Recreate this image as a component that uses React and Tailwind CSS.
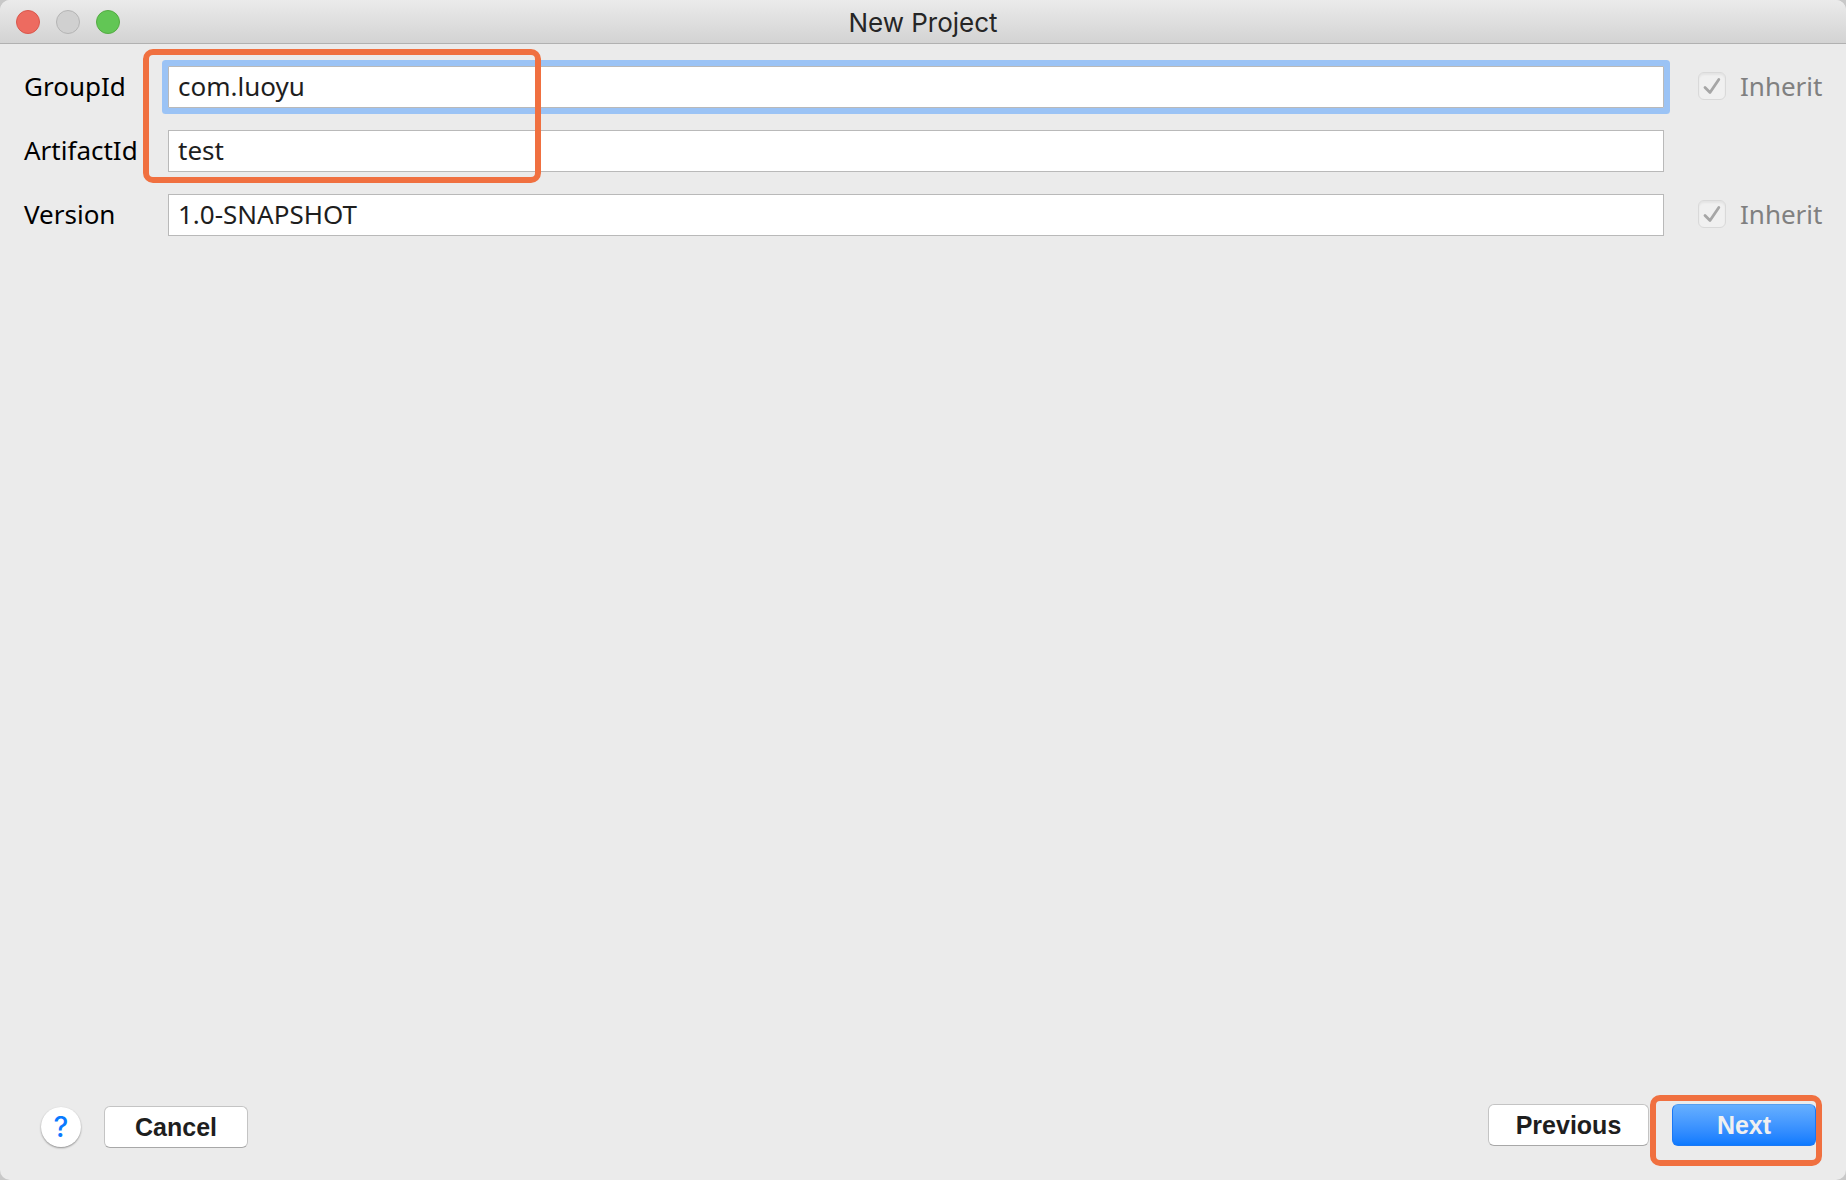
import { useState } from 'react'

function Field({ id, label, value, onChange, inherit, focused }) {
  return (
    <div className="flex items-center h-[42px]">
      <label htmlFor={id} className="w-36 shrink-0 pb-0.5 text-black">{label}</label>
      <input
        id={id}
        type="text"
        value={value}
        onChange={e => onChange(e.target.value)}
        className={`flex-1 min-w-0 h-full px-[9px] pb-0.5 border border-[#b9b9b9] bg-white text-[#1e1e1e] outline-none ${
          focused ? 'rounded-[1px] ring-6 ring-[#9bc3f5]' : ''
        }`}
      />
      <div className="w-[158px] shrink-0 pl-[34px] pb-0.5">
        {inherit && (
          <label className="flex items-center gap-[14px] text-[#808080]">
            <span className="relative flex size-7 shrink-0">
              <input
                type="checkbox"
                checked
                disabled
                readOnly
                className="appearance-none size-7 rounded-md border border-[#d9d9d9] bg-[#f0f0f0] shadow-[inset_0_2px_2px_rgba(0,0,0,0.05)]"
              />
              <svg viewBox="0 0 28 28" className="absolute inset-0 pointer-events-none" aria-hidden="true">
                <path d="M7 15.5 L12 20.5 L20.8 7.5" fill="none" stroke="#a6a6a6" strokeWidth="2.8" strokeLinecap="round" strokeLinejoin="round" />
              </svg>
            </span>
            Inherit
          </label>
        )}
      </div>
    </div>
  )
}

export default function App() {
  const [groupId, setGroupId] = useState('com.luoyu')
  const [artifactId, setArtifactId] = useState('test')
  const [version, setVersion] = useState('1.0-SNAPSHOT')

  const button = 'h-[42px] rounded-md border text-[25px] leading-8 font-bold'
  const plain = 'border-[#c4c4c4] border-b-[#a8a8a8] bg-white text-[#1e1e1e]'

  return (
    <div className="min-h-screen flex bg-[#c8c8c8]">
      <div className="flex-1 flex flex-col rounded-[10px] overflow-hidden bg-[#ebebeb] font-['Noto_Sans','Lucida_Grande',sans-serif] text-[26px] leading-8">
        {/* Title bar */}
        <header className="relative h-11 flex items-center justify-center border-b border-[#b1b1b1] bg-linear-to-b from-[#ebebeb] to-[#d3d3d3]">
          <div className="absolute left-4 flex gap-4">
            <button aria-label="Close" className="size-6 rounded-full border border-[#d9574c] bg-[#ed6b60]" />
            <button aria-label="Minimize" className="size-6 rounded-full border border-[#b4b4b4] bg-[#d0d0d0]" />
            <button aria-label="Zoom" className="size-6 rounded-full border border-[#54ab43] bg-[#62c655]" />
          </div>
          <h1 className="pt-0.5 font-['Inter',sans-serif] text-[#262626]">New Project</h1>
        </header>

        {/* Coordinates */}
        <main className="flex-1 flex flex-col gap-[22px] px-6 pt-[22px]">
          <div className="relative flex flex-col gap-[22px]">
            <Field id="group" label="GroupId" value={groupId} onChange={setGroupId} inherit focused />
            <Field id="artifact" label="ArtifactId" value={artifactId} onChange={setArtifactId} />
            <div className="absolute -top-[17px] -bottom-[11px] left-[119px] w-[398px] rounded-[10px] border-6 border-[#f07040] pointer-events-none" />
          </div>
          <Field id="version" label="Version" value={version} onChange={setVersion} inherit />
        </main>

        {/* Actions */}
        <footer className="flex items-end pl-[41px] pr-[30px] pb-8 font-['Liberation_Sans',Arial,sans-serif]">
          <button aria-label="Help" className="mb-px size-10 rounded-full bg-white text-[28px] text-[#0a7aff] font-['Inter',sans-serif] font-medium shadow-[0_1px_2px_rgba(0,0,0,0.4)]">
            ?
          </button>
          <button className={`${button} ${plain} ml-[23px] w-36`}>Cancel</button>
          <div className="ml-auto flex gap-[23px] pb-0.5">
            <button className={`${button} ${plain} w-[161px]`}>Previous</button>
            <div className="relative flex">
              <button className={`${button} w-36 border-[#1a78f5] border-t-[#559ff0] bg-linear-to-b from-[#66affe] to-[#0b7aff] text-[#f0f0f0]`}>
                Next
              </button>
              <div className="absolute -top-[9px] -bottom-5 -left-[22px] -right-[6px] rounded-[10px] border-6 border-[#f07040] pointer-events-none" />
            </div>
          </div>
        </footer>
      </div>
    </div>
  )
}
